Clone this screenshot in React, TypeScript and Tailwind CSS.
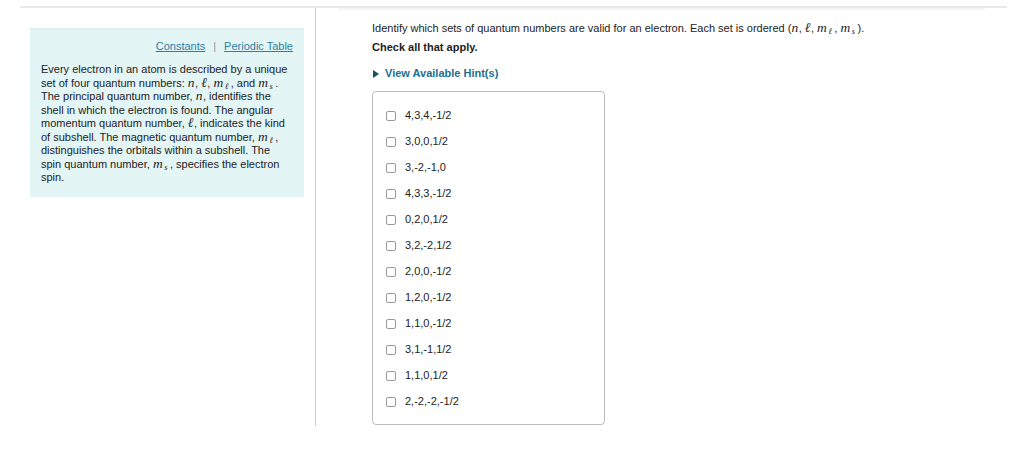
import React from 'react'

const options = [
  '4,3,4,-1/2',
  '3,0,0,1/2',
  '3,-2,-1,0',
  '4,3,3,-1/2',
  '0,2,0,1/2',
  '3,2,-2,1/2',
  '2,0,0,-1/2',
  '1,2,0,-1/2',
  '1,1,0,-1/2',
  '3,1,-1,1/2',
  '1,1,0,1/2',
  '2,-2,-2,-1/2',
]

const M = ({ children }: { children: React.ReactNode }) => (
  <span
    className="italic text-[13.5px] leading-[0px] tracking-[0.5px]"
    style={{ fontFamily: '"Liberation Serif", "DejaVu Serif", serif' }}
  >
    {children}
  </span>
)

const Sub = ({ children }: { children: React.ReactNode }) => (
  <span className="text-[8.5px] italic leading-[0px] relative top-[2px] ml-[1px] mr-[2px]">{children}</span>
)

const App = () => {
  return (
    <div
      className="w-[1024px] h-[456px] bg-white text-[11px] text-[#222] overflow-hidden"
      style={{ fontFamily: '"Liberation Sans", Arial, sans-serif' }}
    >
      <div className="pt-[6px] pl-[20px] pr-[17px]">
        <div className="border-t-2 border-[#e6e8eb] flex">
          {/* Left column */}
          <div className="w-[296px] h-[418px] border-r border-[#c9d1d7] pl-[10px] pt-[20px]">
            <div className="w-[274px] bg-[#e4f5f6] border-t-2 border-[#dcedef] pt-[10px] pb-[12px] pl-[11px] pr-[11px]">
              <div className="flex justify-end items-center gap-[8px] text-[#2c7fa6] leading-[13px]">
                <span className="underline">Constants</span>
                <span className="text-[#8a9aa0]">|</span>
                <span className="underline">Periodic Table</span>
              </div>
              <p className="mt-[10px] leading-[13.5px] text-[#222] whitespace-nowrap">
                Every electron in an atom is described by a unique
                <br />
                set of four quantum numbers: <M>n</M>, <M>ℓ</M>,{' '}
                <M>
                  m<Sub>ℓ</Sub>
                </M>
                , and{' '}
                <M>
                  m<Sub>s</Sub>
                </M>
                .
                <br />
                The principal quantum number, <M>n</M>, identifies the
                <br />
                shell in which the electron is found. The angular
                <br />
                momentum quantum number, <M>ℓ</M>, indicates the kind
                <br />
                of subshell. The magnetic quantum number,{' '}
                <M>
                  m<Sub>ℓ</Sub>
                </M>
                ,
                <br />
                distinguishes the orbitals within a subshell. The
                <br />
                spin quantum number,{' '}
                <M>
                  m<Sub>s</Sub>
                </M>
                , specifies the electron
                <br />
                spin.
              </p>
            </div>
          </div>

          {/* Right column */}
          <div className="flex-1">
            <div className="ml-[22px] mr-[22px] h-[2px] bg-[#f4f5f6]" />
            <div className="pl-[56px] pt-[12px]">
              <p className="leading-[13px] whitespace-nowrap">
                Identify which sets of quantum numbers are valid for an electron. Each set is ordered (<M>n</M>,{' '}
                <M>ℓ</M>,{' '}
                <M>
                  m<Sub>ℓ</Sub>
                </M>
                ,{' '}
                <M>
                  m<Sub>s</Sub>
                </M>
                ).
              </p>
              <p className="mt-[6px] font-bold leading-[13px]">Check all that apply.</p>
              <div className="mt-[13px] flex items-center gap-[6px] text-[#1b6f90] font-bold leading-[13px]">
                <svg width="6" height="8" viewBox="0 0 6 8" className="ml-[1px]">
                  <path d="M0 0 L6 4 L0 8 Z" fill="#1d4f66" />
                </svg>
                <span>View Available Hint(s)</span>
              </div>
              <div className="mt-[11px] w-[233px] border border-[#bdbdbd] rounded-[4px] pt-[17px] pb-[16px] pl-[13px]">
                <ul className="flex flex-col gap-[13px]">
                  {options.map((o) => (
                    <li key={o} className="flex items-center h-[13px] leading-[13px]">
                      <span className="w-[10px] h-[10px] border border-[#9a9a9a] rounded-[2px] bg-white" />
                      <span className="ml-[9px] text-[#222]">{o}</span>
                    </li>
                  ))}
                </ul>
              </div>
            </div>
          </div>
        </div>
      </div>
    </div>
  )
}

export default App
